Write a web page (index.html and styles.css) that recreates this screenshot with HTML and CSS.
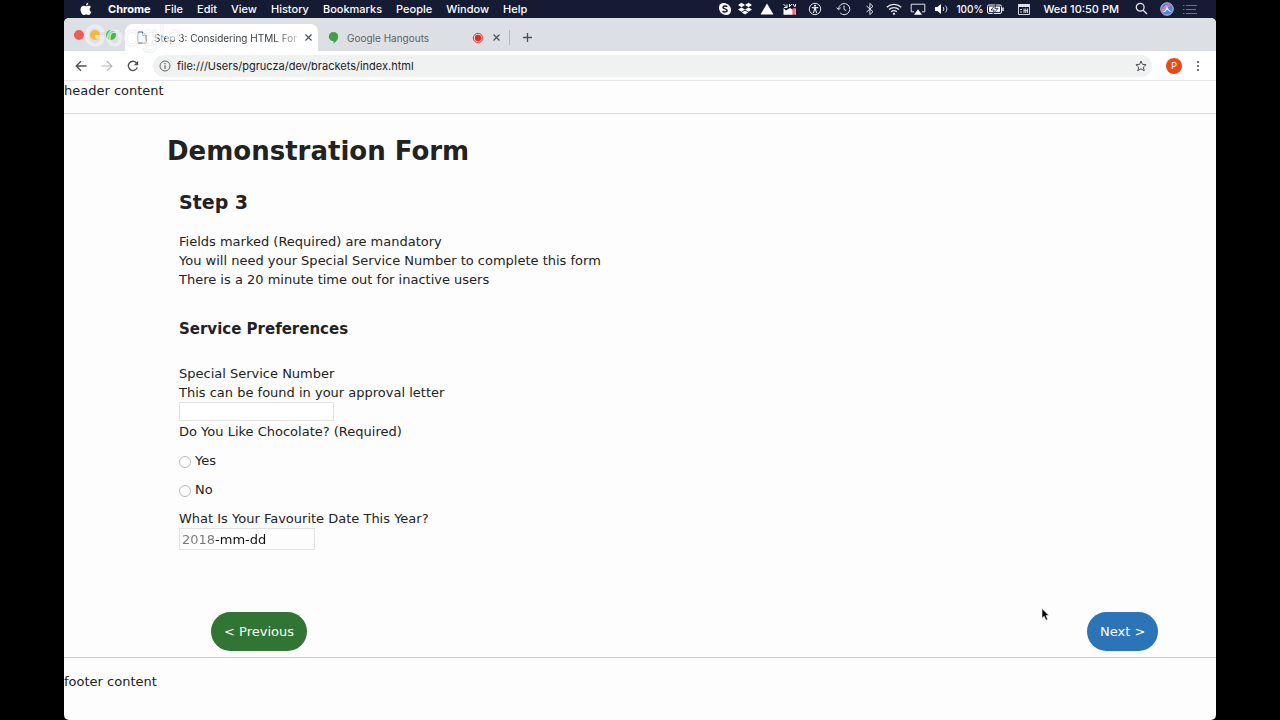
FILE: index.html
```html
<!DOCTYPE html>
<html lang="en">

<head>
    <meta charset="UTF-8">
    <meta name="viewport" content="width=device-width, initial-scale=1.0">

    <title>Step 3: Considering HTML Forms</title>
    <link rel="stylesheet" href="styles.css">
</head>
<body>
    <div class="screen">
        <!-- Mac menu bar -->
        <div class="menubar">
            <svg class="apple" width="12" height="14" viewBox="0 0 12 14" fill="#fff"><path d="M8.3 0.8C8.4 2.2 7.2 3.5 5.9 3.5C5.8 2.2 7 0.9 8.3 0.8ZM6.1 4.3C6.8 4.3 7.4 3.6 8.6 3.7C9.6 3.7 10.5 4.2 11 5C9 6.2 9.2 8.9 11.4 9.8C10.8 11.4 9.8 13 8.6 13C7.6 13 7.3 12.4 6.2 12.4C5.1 12.4 4.7 13 3.8 13C2.2 13 0.5 9.9 0.5 7.5C0.5 5.1 2 3.7 3.7 3.7C4.8 3.7 5.6 4.3 6.1 4.3Z"/></svg>
            <nav class="menus">
                <a href="#" class="app-name">Chrome</a>
                <a href="#">File</a>
                <a href="#">Edit</a>
                <a href="#">View</a>
                <a href="#">History</a>
                <a href="#">Bookmarks</a>
                <a href="#">People</a>
                <a href="#">Window</a>
                <a href="#">Help</a>
            </nav>
            <div class="status">
                <svg width="14" height="14" viewBox="0 0 14 14"><rect x="1" y="1" width="9" height="9" rx="4.5" fill="#fff"/><rect x="4" y="4" width="9" height="9" rx="4.5" fill="#fff"/><circle cx="7" cy="7" r="5.6" fill="#fff"/><path d="M9.2 4.9C8.6 3.6 5 3.6 5 5.4C5 7.3 9.2 6.4 9.2 8.5C9.2 10.4 5.3 10.4 4.7 8.9" fill="none" stroke="#141b33" stroke-width="1.5"/></svg>
                <svg class="dropbox" width="16" height="14" viewBox="0 0 16 14" fill="#fff"><path d="M4.5 0.8L8 3L4.5 5.2L1 3ZM11.5 0.8L15 3L11.5 5.2L8 3ZM4.5 5.4L8 7.6L4.5 9.8L1 7.6ZM11.5 5.4L15 7.6L11.5 9.8L8 7.6ZM8 8.4L11.2 10.4L8 12.6L4.8 10.4Z"/></svg>
                <svg class="drive" width="14" height="14" viewBox="0 0 14 14"><path d="M7 1.5L13.5 12.6H0.5Z" fill="#fff"/></svg>
                <svg class="clip" width="16" height="14" viewBox="0 0 16 14"><path d="M1.5 6L4 8.5L8 6L12 8.5L14 6V12.8H1.5Z" fill="#fff"/><path d="M1.5 2L5 5.5M5 2.5V5.5H2M7 5L10 2M7.5 2V5M11 2L13 5M13.5 2V4.5" stroke="#fff" fill="none"/><rect x="10.5" y="6" width="3" height="7" fill="#dc3b4c"/><path d="M12 7V12" stroke="#fff" stroke-width="0.6"/></svg>
                <svg class="access" width="14" height="14" viewBox="0 0 14 14" fill="none" stroke="#dfe2ea"><circle cx="7" cy="7" r="5.7"/><circle cx="7" cy="3.8" r="1" fill="#fff" stroke="none"/><path d="M3.8 5.6H10.2M6.4 5.6V8L5.3 11M7.6 5.6V8L8.7 11M7 5.6V8" stroke-width="1.1"/></svg>
                <svg class="clock" width="15" height="14" viewBox="0 0 15 14" fill="none" stroke="#dfe2ea"><path d="M2.6 7A5.6 5.6 0 1 1 4.2 11M0.6 5.6L2.6 7.8L4.7 5.8M8 3.6V7.3L10.3 8.7"/></svg>
                <svg class="bluetooth" width="10" height="14" viewBox="0 0 10 14" fill="none" stroke="#dfe2ea"><path d="M1.5 4L8 9.7L4.9 12.6V1.4L8 4.3L1.5 10"/></svg>
                <svg class="wifi" width="16" height="14" viewBox="0 0 16 14" fill="none" stroke="#e6e8ee" stroke-width="1.3"><path d="M0.8 5.2C4.8 1.4 11.2 1.4 15.2 5.2M3 7.5C5.8 4.9 10.2 4.9 13 7.5M5.2 9.8C6.8 8.4 9.2 8.4 10.8 9.8"/><circle cx="8" cy="11.8" r="1.1" fill="#fff" stroke="none"/></svg>
                <svg class="airplay" width="16" height="14" viewBox="0 0 16 14"><path d="M4 9.8H1.2V2.2H14.8V9.8H12" fill="none" stroke="#dfe2ea"/><path d="M8 7.2L12 12.8H4Z" fill="#fff"/></svg>
                <svg class="volume" width="15" height="14" viewBox="0 0 15 14"><path d="M1 5H3.4L7 2V12L3.4 9H1Z" fill="#fff"/><path d="M9 5C10.1 6.2 10.1 7.8 9 9M11.4 3.6C13.4 5.6 13.4 8.4 11.4 10.4" fill="none" stroke="#dfe2ea"/></svg>
                <span class="percent">100%</span>
                <svg class="battery" width="19" height="14" viewBox="0 0 19 14"><rect x="1.5" y="3" width="14" height="8.4" rx="1.4" fill="none" stroke="#fff"/><rect x="3" y="4.5" width="11" height="5.4" fill="#fff"/><path d="M9.8 2.6L5 8H8.2L7 12L12 6.4H8.8Z" fill="#fff" stroke="#141b33" stroke-width="0.8"/><path d="M17 5.5V9" stroke="#fff" stroke-width="1.4"/></svg>
                <svg class="calendar" width="14" height="14" viewBox="0 0 14 14"><path d="M1 2H13V5H1Z" fill="#dfe2ea"/><path d="M1.5 2V12.5H12.5V2M3 7.5H5M3 10H5M7 6.5V11M10.5 6.5V11M7 8.7H10.5M8.7 6.5V11" fill="none" stroke="#cfd3dc"/></svg>
                <span class="time">Wed 10:50 PM</span>
                <svg class="search" width="13" height="14" viewBox="0 0 13 14" fill="none" stroke="#e6e8ee" stroke-width="1.3"><circle cx="5.2" cy="5.2" r="3.9"/><path d="M8.2 8.2L12 12"/></svg>
                <svg class="siri" width="14" height="14" viewBox="0 0 14 14"><circle cx="7" cy="7" r="6.3" fill="#4e83d9" stroke="#d5dbea" stroke-width="0.8"/><path d="M1.5 8C4 3 8 1 12 4C9 4 5 6 3 11Z" fill="#d579c5"/><path d="M2.5 10C5 9 6.5 6 7 4C8 7 9.5 9 12 9.5C9 10 8 8.5 7 7.5C6 9.5 5 10.5 2.5 10Z" fill="#e9f8ff"/></svg>
                <svg class="list" width="16" height="14" viewBox="0 0 16 14" stroke="#6b7186"><path d="M1 3.5H2.5M4 3.5H15M1 7.5H2.5M4 7.5H14M1 11.5H2.5M4 11.5H15"/></svg>
            </div>
        </div>

        <!-- Browser window -->
        <div class="window">
            <div class="tabs">
                <div class="lights">
                    <span class="light red"></span>
                    <span class="light yellow"></span>
                    <span class="light green"></span>
                </div>
                <div class="tab active">
                    <svg width="10" height="13" viewBox="0 0 10 13" fill="none" stroke="#5f6368"><path d="M1 1H5.7L9 4.3V12H1ZM5.5 1V4.5H9"/></svg>
                    <span class="tab-title">Step 3: Considering HTML For</span>
                    <button type="button" class="icon-button" aria-label="Close tab"><svg width="9" height="9" viewBox="0 0 9 9" stroke="#4c4f54" stroke-width="1.2"><path d="M1.5 1.5L7.5 7.5M7.5 1.5L1.5 7.5"/></svg></button>
                </div>
                <div class="tab">
                    <svg width="11" height="13" viewBox="0 0 11 13" fill="#43a047"><path d="M5.5 1C8.3 1 10.2 3 10.2 5.5C10.2 8.6 8 10.8 5.6 12.4V10.2C2.8 10.2 0.8 8 0.8 5.6C0.8 3 2.8 1 5.5 1Z"/></svg>
                    <span class="tab-title">Google Hangouts</span>
                    <svg width="12" height="12" viewBox="0 0 12 12"><circle cx="6" cy="6" r="4.7" fill="none" stroke="#dd3b35"/><circle cx="6" cy="6" r="3.2" fill="#dd2c27"/></svg>
                    <button type="button" class="icon-button" aria-label="Close tab"><svg width="9" height="9" viewBox="0 0 9 9" stroke="#4c4f54" stroke-width="1.2"><path d="M1.5 1.5L7.5 7.5M7.5 1.5L1.5 7.5"/></svg></button>
                </div>
                <button type="button" class="icon-button new-tab" aria-label="New tab"><svg width="11" height="11" viewBox="0 0 11 11" stroke="#4c4f54" stroke-width="1.3"><path d="M5.5 1V10M1 5.5H10"/></svg></button>
                <span class="watermark">Google</span>
            </div>
            <div class="toolbar">
                <button type="button" class="icon-button" aria-label="Back"><svg width="12" height="12" viewBox="0 0 12 12" fill="none" stroke="#4c4f54" stroke-width="1.3"><path d="M11.5 6H1.5M6 1.2L1.2 6L6 10.8"/></svg></button>
                <button type="button" class="icon-button" aria-label="Forward"><svg width="12" height="12" viewBox="0 0 12 12" fill="none" stroke="#b4b6ba" stroke-width="1.2"><path d="M0.5 6H10.5M6 1.2L10.8 6L6 10.8"/></svg></button>
                <button type="button" class="icon-button" aria-label="Reload"><svg width="12" height="12" viewBox="0 0 12 12"><path d="M10.3 7.4A4.6 4.6 0 1 1 9.4 2.8L10.4 4" fill="none" stroke="#4c4f54" stroke-width="1.3"/><path d="M11.2 0.8V5.2H6.8Z" fill="#4c4f54"/></svg></button>
                <div class="address">
                    <svg width="12" height="12" viewBox="0 0 12 12" fill="none" stroke="#5f6368"><circle cx="6" cy="6" r="5"/><path d="M6 5.3V9M6 3V4.2" stroke-width="1.2"/></svg>
                    <input type="text" class="url" aria-label="Address" value="file:///Users/pgrucza/dev/brackets/index.html">
                    <button type="button" class="icon-button" aria-label="Bookmark"><svg width="12" height="12" viewBox="0 0 12 12" fill="none" stroke="#4c4f54"><path d="M6 1L7.4 4.4L11.1 4.7L8.3 7.1L9.2 10.7L6 8.8L2.8 10.7L3.7 7.1L0.9 4.7L4.6 4.4Z"/></svg></button>
                </div>
                <button type="button" class="profile">P</button>
                <button type="button" class="icon-button" aria-label="More"><svg width="4" height="12" viewBox="0 0 4 12" fill="#4c4f54"><circle cx="2" cy="2" r="1.1"/><circle cx="2" cy="6" r="1.1"/><circle cx="2" cy="10" r="1.1"/></svg></button>
            </div>

            <div class="page">
                <header>header content</header>
                <main>
                    <h1>Demonstration Form</h1>
                    <form>
                        <h2>Step 3</h2>
                        <p>
                            Fields marked (Required) are mandatory<br>
                            You will need your Special Service Number to complete this form<br>
                            There is a 20 minute time out for inactive users
                        </p>
                        <h3>Service Preferences</h3>
                        <label for="ssn">Special Service Number<br>This can be found in your approval letter</label>
                        <input type="text" id="ssn" class="field">
                        <fieldset>
                            <legend>Do You Like Chocolate? (Required)</legend>
                            <div class="choice"><input type="radio" name="chocolate" id="yes"><label for="yes">Yes</label></div>
                            <div class="choice"><input type="radio" name="chocolate" id="no"><label for="no">No</label></div>
                        </fieldset>
                        <label for="date">What Is Your Favourite Date This Year?</label>
                        <input type="text" id="date" class="field date" value="2018-mm-dd">
                        <div class="buttons">
                            <button type="button" class="button previous">&lt; Previous</button>
                            <button type="button" class="button next">Next &gt;</button>
                        </div>
                    </form>
                </main>
                <footer>footer content</footer>
            </div>
        </div>

        <svg class="cursor" width="9" height="13" viewBox="0 0 9 13"><path d="M1 0.5V10.3L3.2 8.3L4.9 12.2L6.7 11.4L5 7.6H8Z" fill="#000" stroke="#fff" stroke-width="0.6"/></svg>
    </div>
</body>

</html>
```
FILE: styles.css
```css
* {
    box-sizing: border-box;
}

body {
    margin: 0;
    padding: 0 5%;
    background-color: #000;
    font-family: Inter, "Liberation Sans", sans-serif;
}

svg {
    display: block;
    flex-shrink: 0;
}

.screen {
    position: relative;
    display: flex;
    flex-direction: column;
    min-height: 100vh;
    background: linear-gradient(#141b33 50%, #000 50%);
}

/* menu bar */
.menubar {
    display: flex;
    align-items: center;
    height: 18px;
    padding: 0 18px 0 16px;
    color: #fff;
    font-size: 11px;
    font-weight: 500;
    white-space: nowrap;
}

.menus {
    display: flex;
    gap: 14px;
    margin-left: 16px;
}

.menus a {
    color: #fff;
    text-decoration: none;
}

.menus .app-name {
    font-weight: 700;
}

.status {
    display: flex;
    align-items: center;
    gap: 8px;
    margin-left: auto;
}

.dropbox {
    margin-left: -3px;
}

.drive {
    margin-left: -1px;
}

.access {
    margin-left: 2px;
}

.clock {
    margin-left: 6px;
}

.bluetooth {
    margin-left: 6px;
}

.wifi {
    margin-left: 3px;
}

.percent {
    margin-left: -1px;
    font-size: 10px;
}

.battery {
    margin-left: -5px;
}

.calendar,
.time {
    margin-left: 4px;
}

.search {
    margin-left: 8px;
}

.siri {
    margin-left: 4px;
}

/* browser */
.window {
    display: flex;
    flex: 1;
    flex-direction: column;
    overflow: hidden;
    border-radius: 5px;
    background-color: #fefdfe;
}

.tabs {
    position: relative;
    display: flex;
    align-items: flex-end;
    height: 33px;
    background-color: #dcdfe4;
}

.lights {
    display: flex;
    gap: 6px;
    padding: 0 9px 11px 10px;
}

.light {
    width: 10px;
    height: 10px;
    border-radius: 50%;
}

.red {
    background-color: #f25b55;
}

.yellow {
    background-color: #f5b83a;
}

.green {
    background-color: #3cba54;
}

.tab {
    display: flex;
    align-items: center;
    gap: 8px;
    width: 191px;
    height: 27px;
    padding: 0 8px 0 10px;
    color: #5f6368;
    font-size: 10px;
}

.tab.active {
    gap: 7px;
    width: 193px;
    padding: 0 8px 0 12px;
    border-radius: 8px 8px 0 0;
    background-color: #fff;
    color: #3c4043;
}

.tab-title {
    flex: 1;
    white-space: nowrap;
}

.active .tab-title {
    -webkit-mask-image: linear-gradient(to right, #000 85%, rgba(0, 0, 0, 0.3));
}

.icon-button {
    display: flex;
    padding: 0;
    border: none;
    background: none;
    cursor: pointer;
}

.new-tab {
    padding: 2px 0 2px 12px;
    margin-bottom: 6px;
    border-left: 1px solid #b4b7bc;
}

.watermark {
    position: absolute;
    top: 1px;
    left: 20px;
    color: rgba(255, 255, 255, 0.4);
    font-size: 29px;
    line-height: 34px;
    -webkit-text-stroke: 1px rgba(238, 240, 243, 0.9);
    pointer-events: none;
}

.toolbar {
    display: flex;
    align-items: center;
    gap: 14px;
    height: 30px;
    padding: 0 16px 0 11px;
    border-bottom: 1px solid #e6e6e8;
    background-color: #fff;
}

.address {
    display: flex;
    flex: 1;
    align-items: center;
    gap: 6px;
    height: 22px;
    padding: 0 5px 0 6px;
    border-radius: 11px;
    background-color: #f0f2f2;
}

.url {
    flex: 1;
    padding: 0;
    border: none;
    background: none;
    color: #202124;
    font-family: inherit;
    font-size: 11px;
}

.profile {
    width: 16px;
    height: 16px;
    padding: 0;
    border: none;
    border-radius: 50%;
    background-color: #e64a19;
    color: #fff;
    font-family: inherit;
    font-size: 9px;
}

/* form page */
.page {
    display: flex;
    flex: 1;
    flex-direction: column;
    color: #222;
    font-family: "DejaVu Sans", Verdana, sans-serif;
    font-size: 13px;
    line-height: 19px;
}

header {
    height: 33px;
    border-bottom: 1px solid #d8d8d8;
}

main {
    padding: 20px 5% 6px 103px;
}

h1 {
    margin: 0 0 21px;
    font-size: 26px;
    line-height: 34px;
}

form {
    padding-left: 12px;
}

h2 {
    margin: 0 0 17px;
    font-size: 19px;
    line-height: 26px;
}

p {
    margin: 0;
}

h3 {
    margin: 30px 0 25px;
    font-size: 15px;
    line-height: 20px;
}

label,
legend {
    display: block;
    padding: 0;
}

fieldset {
    margin: 0;
    padding: 0;
    border: none;
}

.field {
    display: block;
    width: 155px;
    height: 19px;
    margin-bottom: 1px;
    padding: 0 2px;
    border: 1px solid #e2e2e2;
    background-color: #fff;
    font-family: inherit;
    font-size: 13px;
}

.choice {
    display: flex;
    align-items: center;
    gap: 4px;
    height: 19px;
    margin: 10px 0;
}

.choice input {
    appearance: none;
    width: 12px;
    height: 12px;
    margin: 2px 0 0;
    border: 1px solid #b8b8b8;
    border-radius: 50%;
    background-color: #fff;
}

/* the year is already filled in, so it is lighter than the rest */
.date {
    width: 136px;
    height: 22px;
    background: linear-gradient(to right, #777 35px, #111 35px);
    -webkit-background-clip: text;
    background-clip: text;
    color: transparent;
}

.buttons {
    display: flex;
    justify-content: space-between;
    margin-top: 62px;
    padding-left: 32px;
}

.button {
    height: 39px;
    padding: 0 13px;
    border: none;
    border-radius: 20px;
    color: #fff;
    font-family: inherit;
    font-size: 13px;
    cursor: pointer;
}

.previous {
    background-color: #307533;
}

.next {
    background-color: #2b74b8;
}

footer {
    padding: 14px 0 20px;
    border-top: 1px solid #ccc;
}

.cursor {
    position: absolute;
    top: 608px;
    left: 977px;
}
```
